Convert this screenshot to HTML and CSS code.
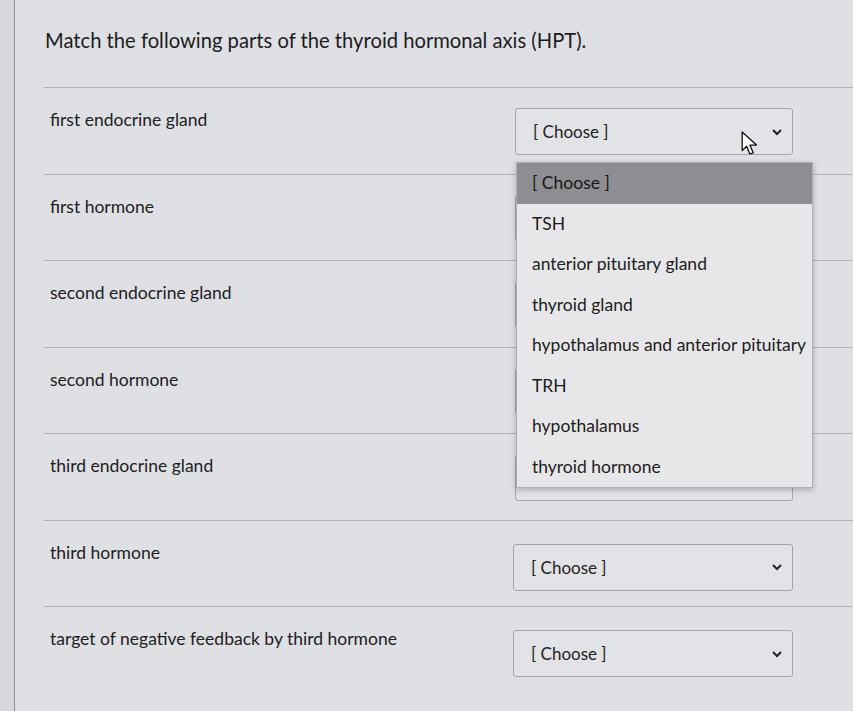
FILE: index.html
```html
<!DOCTYPE html>
<html>
<head>
<meta charset="utf-8">
<link rel="stylesheet" href="styles.css">
</head>
<body>
<div class="page">
  <div class="panel">
    <h1 class="title">Match the following parts of the thyroid hormonal axis (HPT).</h1>
    <div class="rows">
      <div class="row">
        <div class="label">first endocrine gland</div>
        <div class="answer">
          <div class="select"><span>[ Choose ]</span><svg class="chev" width="12" height="8" viewBox="0 0 12 8"><path d="M2 2 L6 6 L10 2" fill="none" stroke="#222" stroke-width="2"/></svg></div>
          <ul class="menu">
            <li class="opt active">[ Choose ]</li>
            <li class="opt">TSH</li>
            <li class="opt">anterior pituitary gland</li>
            <li class="opt">thyroid gland</li>
            <li class="opt">hypothalamus and anterior pituitary</li>
            <li class="opt">TRH</li>
            <li class="opt">hypothalamus</li>
            <li class="opt">thyroid hormone</li>
          </ul>
          <svg class="cursor" width="22" height="28" viewBox="0 0 20 24"><path d="M2 1 L2 18 L6 14 L9 21 L12 20 L9 13 L15 13 Z" fill="#fff" stroke="#111" stroke-width="1.2" stroke-linejoin="round"/></svg>
        </div>
      </div>
      <div class="row">
        <div class="label">first hormone</div>
        <div class="answer"><div class="select covered"></div></div>
      </div>
      <div class="row">
        <div class="label">second endocrine gland</div>
        <div class="answer"><div class="select covered"></div></div>
      </div>
      <div class="row">
        <div class="label">second hormone</div>
        <div class="answer"><div class="select covered"></div></div>
      </div>
      <div class="row">
        <div class="label">third endocrine gland</div>
        <div class="answer"><div class="select covered"></div></div>
      </div>
      <div class="row">
        <div class="label">third hormone</div>
        <div class="answer shift"><div class="select"><span>[ Choose ]</span><svg class="chev" width="12" height="8" viewBox="0 0 12 8"><path d="M2 2 L6 6 L10 2" fill="none" stroke="#222" stroke-width="2"/></svg></div></div>
      </div>
      <div class="row">
        <div class="label">target of negative feedback by third hormone</div>
        <div class="answer shift"><div class="select"><span>[ Choose ]</span><svg class="chev" width="12" height="8" viewBox="0 0 12 8"><path d="M2 2 L6 6 L10 2" fill="none" stroke="#222" stroke-width="2"/></svg></div></div>
      </div>
    </div>
  </div>
</div>
</body>
</html>
```
FILE: styles.css
```css
html, body {
  margin: 0;
  padding: 0;
  background: #d6d7db;
  font-family: Lato, "Liberation Sans", sans-serif;
  color: #1f1f22;
}
.page {
  width: 853px;
  height: 711px;
  overflow: hidden;
  padding-left: 14px;
  box-sizing: border-box;
}
.panel {
  background: #dfe0e4;
  border-left: 1px solid #8a8b90;
  height: 100%;
  padding-left: 28px;
}
.title {
  margin: 0;
  padding: 27px 0 0 2px;
  height: 87px;
  box-sizing: border-box;
  font-size: 20.2px;
  font-weight: 400;
  line-height: 26px;
  color: #1c1c1f;
}
.rows {
  display: flex;
  flex-direction: column;
}
.row {
  display: grid;
  grid-template-columns: 472px 278px;
  height: 86.5px;
  box-sizing: border-box;
  border-top: 1px solid #b3b4b9;
}
.label {
  padding: 22px 0 0 7px;
  font-size: 17.5px;
  line-height: 20px;
  color: #202023;
}
.answer {
  position: relative;
  padding-top: 20px;
}
.answer.shift {
  margin-left: -2px;
  padding-top: 23px;
}
.select {
  height: 47px;
  box-sizing: border-box;
  border: 1px solid #a4a5aa;
  border-radius: 3px;
  background: #e2e3e6;
  display: flex;
  align-items: center;
  justify-content: space-between;
  padding: 0 9px 0 17px;
  font-size: 17px;
  color: #222;
}
.chev {
  display: block;
}
.menu {
  position: absolute;
  left: 1px;
  top: 74px;
  width: 295px;
  margin: 0;
  padding: 0;
  list-style: none;
  background: #e7e7e9;
  border: 1px solid #b0b0b4;
  box-shadow: 0 2px 6px rgba(0,0,0,0.25);
  z-index: 5;
}
.opt {
  height: 40.5px;
  line-height: 40.5px;
  padding-left: 15px;
  font-size: 17.5px;
  color: #1d1d20;
  white-space: nowrap;
}
.opt.active {
  background: #8e8e92;
  color: #161618;
}
.cursor {
  position: absolute;
  left: 225px;
  top: 42px;
  z-index: 6;
}
```
